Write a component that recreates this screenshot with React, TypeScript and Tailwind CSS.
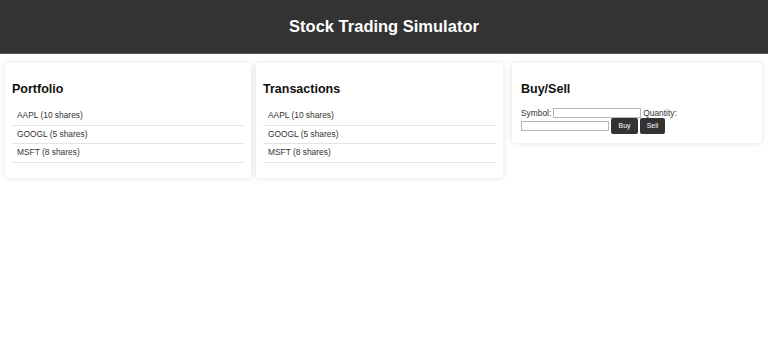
const holdings = ["AAPL (10 shares)", "GOOGL (5 shares)", "MSFT (8 shares)"];

function ListCard({ title, items, width }: { title: string; items: string[]; width: string }) {
  return (
    <div className={`${width} shrink-0 rounded-[3px] bg-white px-[7px] pt-[7px] pb-[7px] shadow-[0_0_6px_rgba(0,0,0,0.12)]`}>
      <h2 className="mt-[12px] mb-[11px] text-[12.5px] leading-[14.4px] font-bold text-[#111]">{title}</h2>
      <ul className="mb-[8px]">
        {items.map(item => (
          <li key={item} className="border-b border-[#e4e4e4] px-[5px] py-[4px] text-[8.4px] leading-[9.5px] text-[#333]">
            {item}
          </li>
        ))}
      </ul>
    </div>
  );
}

export default function App() {
  return (
    <div className="min-h-[360px] bg-white font-['Liberation_Sans',Arial,sans-serif]">
      <header className="flex h-[54px] items-center justify-center border-b border-[#555] bg-[#333]">
        <h1 className="text-[16.5px] leading-[19px] font-bold text-white">Stock Trading Simulator</h1>
      </header>

      <main className="mt-[9px] flex items-start pl-[5px]">
        <ListCard title="Portfolio" items={holdings} width="w-[246px]" />
        <div className="ml-[5px]">
          <ListCard title="Transactions" items={holdings} width="w-[247px]" />
        </div>

        <div className="ml-[9px] w-[250px] shrink-0 rounded-[3px] bg-white px-[9px] pt-[7px] pb-[9px] shadow-[0_0_6px_rgba(0,0,0,0.12)]">
          <h2 className="mt-[12px] mb-[12px] text-[12.5px] leading-[14.4px] font-bold text-[#111]">Buy/Sell</h2>
          <form onSubmit={e => e.preventDefault()}>
            <div className="flex items-center text-[8.4px] leading-[10px] text-[#333]">
              <label>Symbol:</label>
              <input
                type="text"
                className="ml-[2px] h-[10px] w-[88px] border border-[#b5b5b5] bg-white"
              />
              <label className="ml-[2px]">Quantity:</label>
            </div>
            <div className="flex items-center">
              <input
                type="number"
                className="h-[10px] w-[88px] border border-[#b5b5b5] bg-white"
              />
              <button
                type="submit"
                className="ml-[2px] h-[16px] w-[27px] rounded-[2px] bg-[#333] text-[6.9px] text-white"
              >
                Buy
              </button>
              <button
                type="button"
                className="ml-[2px] h-[16px] w-[25px] rounded-[2px] bg-[#333] text-[6.9px] text-white"
              >
                Sell
              </button>
            </div>
          </form>
        </div>
      </main>
    </div>
  );
}
